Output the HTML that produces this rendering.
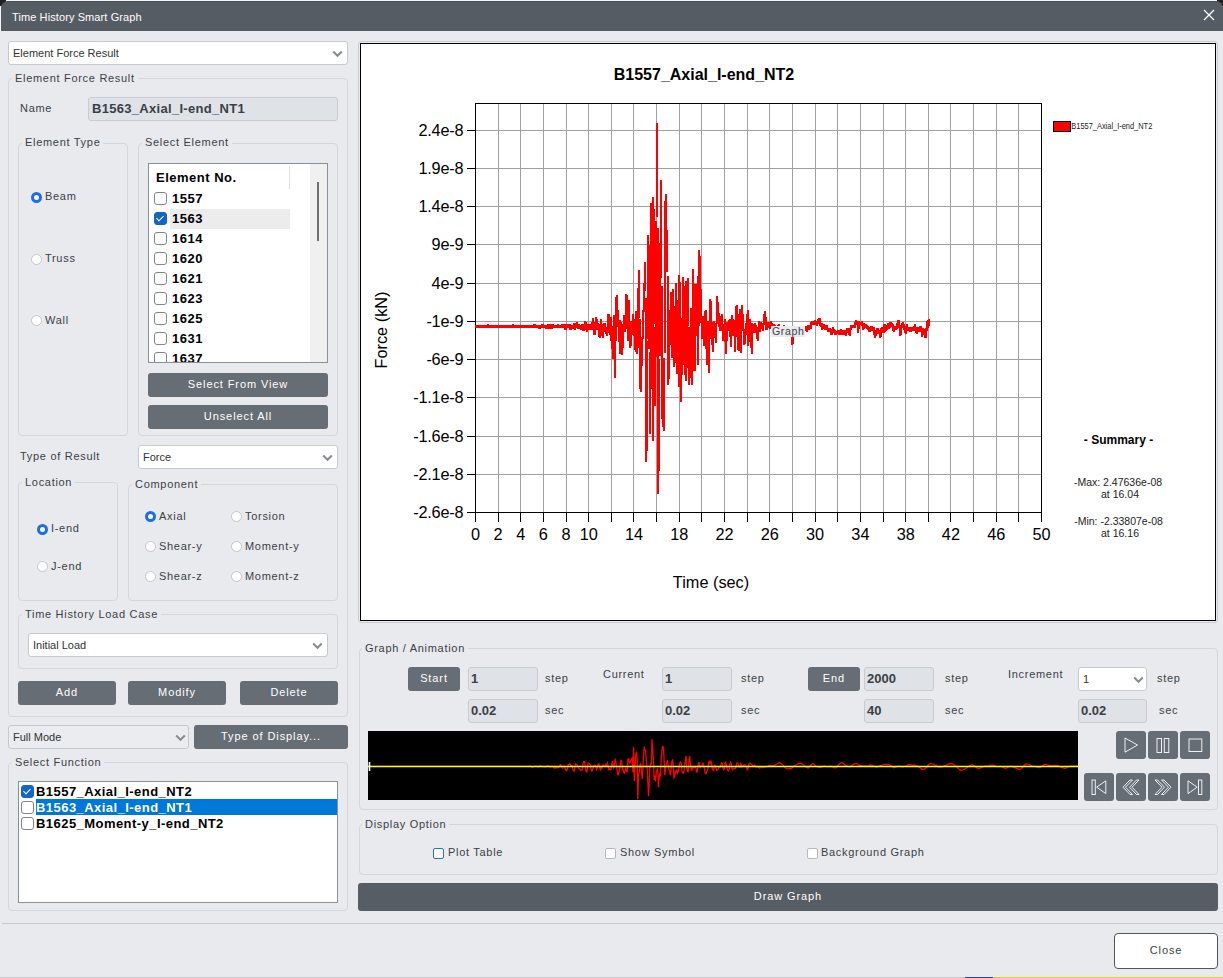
<!DOCTYPE html>
<html><head><meta charset="utf-8">
<style>
*{box-sizing:border-box;margin:0;padding:0}
html,body{width:1223px;height:978px;overflow:hidden;background:#e9eaed;font-family:"Liberation Sans",sans-serif;}
.a{position:absolute}
#title{left:1px;top:1px;width:1222px;height:30px;background:#565c64;border-top:1px solid #4b5159;border-top-left-radius:7px;border-top-right-radius:7px;}
#title .t{left:11px;top:9px;color:#fff;font-size:11px;letter-spacing:0.1px}
.grp{position:absolute;border:1px solid #d3d6da;border-radius:4px}
.gl{position:absolute;font-size:11px;letter-spacing:0.7px;color:#3a3f45;background:#e9eaed;padding:0 3px;line-height:12px;white-space:nowrap}
.lbl{position:absolute;font-size:11px;letter-spacing:0.7px;color:#3a3f45;line-height:12px;white-space:nowrap}
.combo{position:absolute;background:#fff;border:1px solid #c5cad0;border-radius:3px;font-size:11px;color:#333;white-space:nowrap}
.combo .ct{position:absolute;left:4px;top:5px;line-height:12px}
.chev{position:absolute;width:7px;height:7px;border-right:2px solid #7d8288;border-bottom:2px solid #7d8288;transform:rotate(45deg)}
.btn{position:absolute;background:#676d75;border-radius:3px;color:#fff;font-size:11px;letter-spacing:0.9px;text-align:center;white-space:nowrap}
.field{position:absolute;background:#dfe2e6;border:1px solid #c8ccd1;border-radius:3px;font-weight:bold;color:#3a3f45;white-space:nowrap}
.radio{position:absolute;width:11px;height:11px;border-radius:50%;border:1px solid #c3c6ca;background:#fff}
.radio.on{border:3px solid #1a6fe6;background:#fff}
.cb{position:absolute;width:13px;height:13px;border:1px solid #80858b;border-radius:3px;background:#fff}
.cb.on{background:#1565c9;border-color:#1565c9}
.cb.on::after{content:"";position:absolute;left:3px;top:1px;width:3px;height:6px;border-right:1.5px solid #fff;border-bottom:1.5px solid #fff;transform:rotate(45deg)}
.num{position:absolute;font-size:13px;font-weight:bold;letter-spacing:0.5px;color:#000;line-height:14px}
</style></head><body>
<div class="a" style="left:0;top:0;width:1223px;height:1px;background:#f4f5f7"></div><div class="a" style="left:0;top:0;width:1px;height:31px;background:#f4f5f7"></div><div class="a" style="left:0;top:0;width:6px;height:6px;background:#1e2226"></div><div class="a" style="left:1217px;top:0;width:6px;height:6px;background:#1e2226"></div><div class="a" style="left:0;top:977px;width:965px;height:1px;background:#c9cacc"></div><div class="a" style="left:965px;top:977px;width:28px;height:1px;background:#3040a0"></div><div class="a" style="left:993px;top:977px;width:230px;height:1px;background:#d8d040"></div>
<div id="title" class="a"><div class="a t">Time History Smart Graph</div>
<svg class="a" style="left:1202px;top:7px" width="12" height="12"><path d="M1 1L11 11M11 1L1 11" stroke="#fff" stroke-width="1.3"/></svg>
</div>

<!-- top combo -->
<div class="combo" style="left:8px;top:41px;width:340px;height:24px"><span class="ct">Element Force Result</span><svg class="a" style="left:323px;top:8px" width="11" height="8"><path d="M1.2 1.5L5.5 5.8L9.8 1.5" fill="none" stroke="#878c92" stroke-width="2"/></svg></div>

<!-- Element Force Result group -->
<div class="grp" style="left:8px;top:78px;width:340px;height:639px"></div>
<div class="gl" style="left:12px;top:72px">Element Force Result</div>
<div class="lbl" style="left:20px;top:102px">Name</div>
<div class="field" style="left:88px;top:97px;width:250px;height:24px;font-size:13px;letter-spacing:0.3px;padding:3px 0 0 3px">B1563_Axial_I-end_NT1</div>

<div class="grp" style="left:18px;top:143px;width:110px;height:293px"></div>
<div class="gl" style="left:22px;top:136px">Element Type</div>
<div class="radio on" style="left:31px;top:192px"></div><div class="lbl" style="left:45px;top:190px">Beam</div>
<div class="radio" style="left:31px;top:254px"></div><div class="lbl" style="left:45px;top:252px">Truss</div>
<div class="radio" style="left:31px;top:315px"></div><div class="lbl" style="left:45px;top:314px">Wall</div>

<div class="grp" style="left:138px;top:143px;width:200px;height:293px"></div>
<div class="gl" style="left:142px;top:136px">Select Element</div>
<div class="a" style="left:148px;top:163px;width:180px;height:200px;background:#fff;border:1px solid #8a9098;overflow:hidden">
  <div class="num" style="left:7px;top:7px">Element No.</div>
  <div class="a" style="left:140px;top:2px;width:1px;height:23px;background:#e0e0e0"></div>
  <div class="a" style="left:161px;top:0;width:18px;height:200px;background:#f0f0f0"></div>
  <div class="a" style="left:168px;top:18px;width:2px;height:59px;background:#707070"></div>
  <div class="a" style="left:21px;top:45px;width:120px;height:20px;background:#ececec"></div>
  <div class="cb" style="left:5px;top:28px"></div><div class="num" style="left:23px;top:28px">1557</div>
  <div class="cb on" style="left:5px;top:48px"></div><div class="num" style="left:23px;top:48px">1563</div>
  <div class="cb" style="left:5px;top:68px"></div><div class="num" style="left:23px;top:68px">1614</div>
  <div class="cb" style="left:5px;top:88px"></div><div class="num" style="left:23px;top:88px">1620</div>
  <div class="cb" style="left:5px;top:108px"></div><div class="num" style="left:23px;top:108px">1621</div>
  <div class="cb" style="left:5px;top:128px"></div><div class="num" style="left:23px;top:128px">1623</div>
  <div class="cb" style="left:5px;top:148px"></div><div class="num" style="left:23px;top:148px">1625</div>
  <div class="cb" style="left:5px;top:168px"></div><div class="num" style="left:23px;top:168px">1631</div>
  <div class="cb" style="left:5px;top:188px"></div><div class="num" style="left:23px;top:188px">1637</div>
</div>
<div class="btn" style="left:148px;top:373px;width:180px;height:24px;line-height:23px">Select From View</div>
<div class="btn" style="left:148px;top:405px;width:180px;height:24px;line-height:23px">Unselect All</div>

<div class="lbl" style="left:20px;top:450px">Type of Result</div>
<div class="combo" style="left:138px;top:445px;width:200px;height:24px"><span class="ct">Force</span><svg class="a" style="left:183px;top:8px" width="11" height="8"><path d="M1.2 1.5L5.5 5.8L9.8 1.5" fill="none" stroke="#878c92" stroke-width="2"/></svg></div>

<div class="grp" style="left:18px;top:482px;width:100px;height:119px"></div>
<div class="gl" style="left:22px;top:476px">Location</div>
<div class="radio on" style="left:37px;top:524px"></div><div class="lbl" style="left:51px;top:522px">I-end</div>
<div class="radio" style="left:37px;top:561px"></div><div class="lbl" style="left:51px;top:560px">J-end</div>

<div class="grp" style="left:128px;top:484px;width:210px;height:117px"></div>
<div class="gl" style="left:132px;top:478px">Component</div>
<div class="radio on" style="left:145px;top:511px"></div><div class="lbl" style="left:159px;top:510px">Axial</div>
<div class="radio" style="left:231px;top:511px"></div><div class="lbl" style="left:245px;top:510px">Torsion</div>
<div class="radio" style="left:145px;top:541px"></div><div class="lbl" style="left:159px;top:540px">Shear-y</div>
<div class="radio" style="left:231px;top:541px"></div><div class="lbl" style="left:245px;top:540px">Moment-y</div>
<div class="radio" style="left:145px;top:571px"></div><div class="lbl" style="left:159px;top:570px">Shear-z</div>
<div class="radio" style="left:231px;top:571px"></div><div class="lbl" style="left:245px;top:570px">Moment-z</div>

<div class="grp" style="left:18px;top:614px;width:320px;height:55px"></div>
<div class="gl" style="left:22px;top:608px">Time History Load Case</div>
<div class="combo" style="left:28px;top:633px;width:300px;height:24px"><span class="ct">Initial Load</span><svg class="a" style="left:283px;top:8px" width="11" height="8"><path d="M1.2 1.5L5.5 5.8L9.8 1.5" fill="none" stroke="#878c92" stroke-width="2"/></svg></div>

<div class="btn" style="left:18px;top:681px;width:98px;height:24px;line-height:23px">Add</div>
<div class="btn" style="left:128px;top:681px;width:98px;height:24px;line-height:23px">Modify</div>
<div class="btn" style="left:240px;top:681px;width:98px;height:24px;line-height:23px">Delete</div>

<div class="combo" style="left:8px;top:725px;width:181px;height:24px;background:#ebecef"><span class="ct">Full Mode</span><svg class="a" style="left:166px;top:8px" width="11" height="8"><path d="M1.2 1.5L5.5 5.8L9.8 1.5" fill="none" stroke="#878c92" stroke-width="2"/></svg></div>
<div class="btn" style="left:194px;top:725px;width:154px;height:24px;line-height:23px">Type of Display...</div>

<div class="grp" style="left:8px;top:762px;width:340px;height:149px"></div>
<div class="gl" style="left:12px;top:756px">Select Function</div>
<div class="a" style="left:18px;top:781px;width:320px;height:122px;background:#fff;border:1px solid #8a9098;overflow:hidden">
  <div class="cb on" style="left:2px;top:3px"></div><div class="num" style="left:17px;top:3px;letter-spacing:0.45px">B1557_Axial_I-end_NT2</div>
  <div class="a" style="left:17px;top:17px;width:301px;height:16px;background:#0078d7"></div>
  <div class="cb" style="left:2px;top:19px"></div><div class="num" style="left:17px;top:19px;color:#fff;letter-spacing:0.45px">B1563_Axial_I-end_NT1</div>
  <div class="cb" style="left:2px;top:35px"></div><div class="num" style="left:17px;top:35px;letter-spacing:0.45px">B1625_Moment-y_I-end_NT2</div>
</div>


<!-- chart panel -->
<div class="a" style="left:358px;top:41px;width:860px;height:582px;border:1px solid #c9cdd2;border-radius:3px"></div>
<div class="a" style="left:360px;top:43px;width:856px;height:578px;background:#fff;border:1px solid #000"></div>
<!--CHART-->
<svg class="a" style="left:361px;top:44px" width="855" height="577" viewBox="361 44 855 577">
<line x1="498.5" y1="103" x2="498.5" y2="512" stroke="#a0a0a0" stroke-width="1"/>
<line x1="520.5" y1="103" x2="520.5" y2="512" stroke="#a0a0a0" stroke-width="1"/>
<line x1="543.5" y1="103" x2="543.5" y2="512" stroke="#a0a0a0" stroke-width="1"/>
<line x1="566.5" y1="103" x2="566.5" y2="512" stroke="#a0a0a0" stroke-width="1"/>
<line x1="588.5" y1="103" x2="588.5" y2="512" stroke="#a0a0a0" stroke-width="1"/>
<line x1="611.5" y1="103" x2="611.5" y2="512" stroke="#a0a0a0" stroke-width="1"/>
<line x1="633.5" y1="103" x2="633.5" y2="512" stroke="#a0a0a0" stroke-width="1"/>
<line x1="656.5" y1="103" x2="656.5" y2="512" stroke="#a0a0a0" stroke-width="1"/>
<line x1="679.5" y1="103" x2="679.5" y2="512" stroke="#a0a0a0" stroke-width="1"/>
<line x1="701.5" y1="103" x2="701.5" y2="512" stroke="#a0a0a0" stroke-width="1"/>
<line x1="724.5" y1="103" x2="724.5" y2="512" stroke="#a0a0a0" stroke-width="1"/>
<line x1="747.5" y1="103" x2="747.5" y2="512" stroke="#a0a0a0" stroke-width="1"/>
<line x1="769.5" y1="103" x2="769.5" y2="512" stroke="#a0a0a0" stroke-width="1"/>
<line x1="792.5" y1="103" x2="792.5" y2="512" stroke="#a0a0a0" stroke-width="1"/>
<line x1="815.5" y1="103" x2="815.5" y2="512" stroke="#a0a0a0" stroke-width="1"/>
<line x1="837.5" y1="103" x2="837.5" y2="512" stroke="#a0a0a0" stroke-width="1"/>
<line x1="860.5" y1="103" x2="860.5" y2="512" stroke="#a0a0a0" stroke-width="1"/>
<line x1="883.5" y1="103" x2="883.5" y2="512" stroke="#a0a0a0" stroke-width="1"/>
<line x1="905.5" y1="103" x2="905.5" y2="512" stroke="#a0a0a0" stroke-width="1"/>
<line x1="928.5" y1="103" x2="928.5" y2="512" stroke="#a0a0a0" stroke-width="1"/>
<line x1="950.5" y1="103" x2="950.5" y2="512" stroke="#a0a0a0" stroke-width="1"/>
<line x1="973.5" y1="103" x2="973.5" y2="512" stroke="#a0a0a0" stroke-width="1"/>
<line x1="996.5" y1="103" x2="996.5" y2="512" stroke="#a0a0a0" stroke-width="1"/>
<line x1="1018.5" y1="103" x2="1018.5" y2="512" stroke="#a0a0a0" stroke-width="1"/>
<line x1="475" y1="130.5" x2="1041" y2="130.5" stroke="#a0a0a0" stroke-width="1"/>
<line x1="475" y1="168.5" x2="1041" y2="168.5" stroke="#a0a0a0" stroke-width="1"/>
<line x1="475" y1="206.5" x2="1041" y2="206.5" stroke="#a0a0a0" stroke-width="1"/>
<line x1="475" y1="244.5" x2="1041" y2="244.5" stroke="#a0a0a0" stroke-width="1"/>
<line x1="475" y1="283.5" x2="1041" y2="283.5" stroke="#a0a0a0" stroke-width="1"/>
<line x1="475" y1="321.5" x2="1041" y2="321.5" stroke="#a0a0a0" stroke-width="1"/>
<line x1="475" y1="359.5" x2="1041" y2="359.5" stroke="#a0a0a0" stroke-width="1"/>
<line x1="475" y1="397.5" x2="1041" y2="397.5" stroke="#a0a0a0" stroke-width="1"/>
<line x1="475" y1="436.5" x2="1041" y2="436.5" stroke="#a0a0a0" stroke-width="1"/>
<line x1="475" y1="474.5" x2="1041" y2="474.5" stroke="#a0a0a0" stroke-width="1"/>
<rect x="475.5" y="103.5" width="566" height="409" fill="none" stroke="#000" stroke-width="1"/>
<line x1="467" y1="130.5" x2="475" y2="130.5" stroke="#000" stroke-width="1"/>
<text x="463.2" y="136.1" text-anchor="end" font-size="16.3" letter-spacing="-0.25">2.4e-8</text>
<line x1="467" y1="168.5" x2="475" y2="168.5" stroke="#000" stroke-width="1"/>
<text x="463.2" y="174.1" text-anchor="end" font-size="16.3" letter-spacing="-0.25">1.9e-8</text>
<line x1="467" y1="206.5" x2="475" y2="206.5" stroke="#000" stroke-width="1"/>
<text x="463.2" y="212.1" text-anchor="end" font-size="16.3" letter-spacing="-0.25">1.4e-8</text>
<line x1="467" y1="244.5" x2="475" y2="244.5" stroke="#000" stroke-width="1"/>
<text x="463.2" y="250.1" text-anchor="end" font-size="16.3" letter-spacing="-0.25">9e-9</text>
<line x1="467" y1="283.5" x2="475" y2="283.5" stroke="#000" stroke-width="1"/>
<text x="463.2" y="289.1" text-anchor="end" font-size="16.3" letter-spacing="-0.25">4e-9</text>
<line x1="467" y1="321.5" x2="475" y2="321.5" stroke="#000" stroke-width="1"/>
<text x="463.2" y="327.1" text-anchor="end" font-size="16.3" letter-spacing="-0.25">-1e-9</text>
<line x1="467" y1="359.5" x2="475" y2="359.5" stroke="#000" stroke-width="1"/>
<text x="463.2" y="365.1" text-anchor="end" font-size="16.3" letter-spacing="-0.25">-6e-9</text>
<line x1="467" y1="397.5" x2="475" y2="397.5" stroke="#000" stroke-width="1"/>
<text x="463.2" y="403.1" text-anchor="end" font-size="16.3" letter-spacing="-0.25">-1.1e-8</text>
<line x1="467" y1="436.5" x2="475" y2="436.5" stroke="#000" stroke-width="1"/>
<text x="463.2" y="442.1" text-anchor="end" font-size="16.3" letter-spacing="-0.25">-1.6e-8</text>
<line x1="467" y1="474.5" x2="475" y2="474.5" stroke="#000" stroke-width="1"/>
<text x="463.2" y="480.1" text-anchor="end" font-size="16.3" letter-spacing="-0.25">-2.1e-8</text>
<line x1="467" y1="512.5" x2="475" y2="512.5" stroke="#000" stroke-width="1"/>
<text x="463.2" y="518.1" text-anchor="end" font-size="16.3" letter-spacing="-0.25">-2.6e-8</text>
<line x1="475.5" y1="512" x2="475.5" y2="522" stroke="#000" stroke-width="1"/>
<text x="475.5" y="540" text-anchor="middle" font-size="16.3">0</text>
<line x1="498.5" y1="512" x2="498.5" y2="522" stroke="#000" stroke-width="1"/>
<text x="498.1" y="540" text-anchor="middle" font-size="16.3">2</text>
<line x1="520.5" y1="512" x2="520.5" y2="522" stroke="#000" stroke-width="1"/>
<text x="520.8" y="540" text-anchor="middle" font-size="16.3">4</text>
<line x1="543.5" y1="512" x2="543.5" y2="522" stroke="#000" stroke-width="1"/>
<text x="543.4" y="540" text-anchor="middle" font-size="16.3">6</text>
<line x1="566.5" y1="512" x2="566.5" y2="522" stroke="#000" stroke-width="1"/>
<text x="566.1" y="540" text-anchor="middle" font-size="16.3">8</text>
<line x1="588.5" y1="512" x2="588.5" y2="522" stroke="#000" stroke-width="1"/>
<text x="588.7" y="540" text-anchor="middle" font-size="16.3">10</text>
<line x1="611.5" y1="512" x2="611.5" y2="522" stroke="#000" stroke-width="1"/>
<line x1="633.5" y1="512" x2="633.5" y2="522" stroke="#000" stroke-width="1"/>
<text x="634.0" y="540" text-anchor="middle" font-size="16.3">14</text>
<line x1="656.5" y1="512" x2="656.5" y2="522" stroke="#000" stroke-width="1"/>
<line x1="679.5" y1="512" x2="679.5" y2="522" stroke="#000" stroke-width="1"/>
<text x="679.3" y="540" text-anchor="middle" font-size="16.3">18</text>
<line x1="701.5" y1="512" x2="701.5" y2="522" stroke="#000" stroke-width="1"/>
<line x1="724.5" y1="512" x2="724.5" y2="522" stroke="#000" stroke-width="1"/>
<text x="724.5" y="540" text-anchor="middle" font-size="16.3">22</text>
<line x1="747.5" y1="512" x2="747.5" y2="522" stroke="#000" stroke-width="1"/>
<line x1="769.5" y1="512" x2="769.5" y2="522" stroke="#000" stroke-width="1"/>
<text x="769.8" y="540" text-anchor="middle" font-size="16.3">26</text>
<line x1="792.5" y1="512" x2="792.5" y2="522" stroke="#000" stroke-width="1"/>
<line x1="815.5" y1="512" x2="815.5" y2="522" stroke="#000" stroke-width="1"/>
<text x="815.1" y="540" text-anchor="middle" font-size="16.3">30</text>
<line x1="837.5" y1="512" x2="837.5" y2="522" stroke="#000" stroke-width="1"/>
<line x1="860.5" y1="512" x2="860.5" y2="522" stroke="#000" stroke-width="1"/>
<text x="860.4" y="540" text-anchor="middle" font-size="16.3">34</text>
<line x1="883.5" y1="512" x2="883.5" y2="522" stroke="#000" stroke-width="1"/>
<line x1="905.5" y1="512" x2="905.5" y2="522" stroke="#000" stroke-width="1"/>
<text x="905.7" y="540" text-anchor="middle" font-size="16.3">38</text>
<line x1="928.5" y1="512" x2="928.5" y2="522" stroke="#000" stroke-width="1"/>
<line x1="950.5" y1="512" x2="950.5" y2="522" stroke="#000" stroke-width="1"/>
<text x="950.9" y="540" text-anchor="middle" font-size="16.3">42</text>
<line x1="973.5" y1="512" x2="973.5" y2="522" stroke="#000" stroke-width="1"/>
<line x1="996.5" y1="512" x2="996.5" y2="522" stroke="#000" stroke-width="1"/>
<text x="996.2" y="540" text-anchor="middle" font-size="16.3">46</text>
<line x1="1018.5" y1="512" x2="1018.5" y2="522" stroke="#000" stroke-width="1"/>
<line x1="1041.5" y1="512" x2="1041.5" y2="522" stroke="#000" stroke-width="1"/>
<text x="1041.5" y="540" text-anchor="middle" font-size="16.3">50</text>
<text x="711" y="588" text-anchor="middle" font-size="16.3">Time (sec)</text>
<text transform="translate(386.6 330) rotate(-90)" text-anchor="middle" font-size="16.3">Force (kN)</text>
<text x="704" y="80" text-anchor="middle" font-size="16" font-weight="bold">B1557_Axial_I-end_NT2</text>
<rect x="1053.5" y="121.5" width="17" height="10" fill="#ff0000" stroke="#000" stroke-width="1"/>
<text x="1071.3" y="129.3" font-size="8.4" fill="#222" textLength="81" lengthAdjust="spacingAndGlyphs">B1557_Axial_I-end_NT2</text>
<text x="1118.5" y="444" text-anchor="middle" font-size="12" font-weight="bold">- Summary -</text>
<text x="1118" y="485.5" text-anchor="middle" font-size="10.5" fill="#222">-Max: 2.47636e-08</text>
<text x="1120" y="498.3" text-anchor="middle" font-size="10.5" fill="#222">at 16.04</text>
<text x="1118.5" y="524.6" text-anchor="middle" font-size="10.5" fill="#222">-Min: -2.33807e-08</text>
<text x="1120" y="537" text-anchor="middle" font-size="10.5" fill="#222">at 16.16</text>
<path d="M475 325h2V328h-2ZM476 325h2V328h-2ZM477 325h2V328h-2ZM478 325h2V328h-2ZM479 325h2V328h-2ZM480 325h2V328h-2ZM481 325h2V328h-2ZM482 325h2V328h-2ZM483 325h2V328h-2ZM484 325h2V328h-2ZM485 325h2V328h-2ZM486 325h2V328h-2ZM487 324h2V328h-2ZM488 325h2V328h-2ZM489 325h2V328h-2ZM490 325h2V328h-2ZM491 325h2V328h-2ZM492 325h2V328h-2ZM493 325h2V328h-2ZM494 325h2V328h-2ZM495 325h2V328h-2ZM496 325h2V328h-2ZM497 325h2V328h-2ZM498 325h2V328h-2ZM499 325h2V328h-2ZM500 325h2V328h-2ZM501 325h2V328h-2ZM502 325h2V328h-2ZM503 325h2V328h-2ZM504 325h2V328h-2ZM505 325h2V328h-2ZM506 325h2V328h-2ZM507 325h2V328h-2ZM508 325h2V328h-2ZM509 325h2V328h-2ZM510 325h2V328h-2ZM511 325h2V328h-2ZM512 324h2V328h-2ZM513 325h2V328h-2ZM514 325h2V328h-2ZM515 325h2V328h-2ZM516 325h2V328h-2ZM517 325h2V328h-2ZM518 325h2V328h-2ZM519 325h2V328h-2ZM520 325h2V328h-2ZM521 325h2V328h-2ZM522 325h2V328h-2ZM523 325h2V328h-2ZM524 325h2V328h-2ZM525 325h2V328h-2ZM526 325h2V328h-2ZM527 325h2V328h-2ZM528 325h2V328h-2ZM529 325h2V328h-2ZM530 325h2V328h-2ZM531 325h2V328h-2ZM532 325h2V328h-2ZM533 324h2V328h-2ZM534 324h2V328h-2ZM535 325h2V328h-2ZM536 325h2V328h-2ZM537 325h2V328h-2ZM538 325h2V329h-2ZM539 325h2V329h-2ZM540 325h2V328h-2ZM541 324h2V328h-2ZM542 324h2V328h-2ZM543 325h2V328h-2ZM544 325h2V328h-2ZM545 325h2V329h-2ZM546 325h2V329h-2ZM547 324h2V328h-2ZM548 325h2V329h-2ZM549 324h2V328h-2ZM550 324h2V329h-2ZM551 325h2V329h-2ZM552 324h2V328h-2ZM553 325h2V328h-2ZM554 325h2V328h-2ZM555 325h2V328h-2ZM556 325h2V328h-2ZM557 324h2V328h-2ZM558 325h2V328h-2ZM559 325h2V328h-2ZM560 325h2V328h-2ZM561 324h2V328h-2ZM562 324h2V328h-2ZM563 324h2V328h-2ZM564 324h2V330h-2ZM565 325h2V330h-2ZM566 324h2V328h-2ZM567 324h2V328h-2ZM568 324h2V328h-2ZM569 324h2V330h-2ZM570 325h2V330h-2ZM571 325h2V329h-2ZM572 325h2V329h-2ZM573 323h2V328h-2ZM574 325h2V330h-2ZM575 323h2V328h-2ZM576 322h2V327h-2ZM577 324h2V329h-2ZM578 324h2V328h-2ZM579 325h2V329h-2ZM580 326h2V330h-2ZM581 324h2V329h-2ZM582 324h2V331h-2ZM583 325h2V331h-2ZM584 321h2V328h-2ZM585 322h2V330h-2ZM586 327h2V332h-2ZM587 324h2V330h-2ZM588 324h2V329h-2ZM589 325h2V330h-2ZM590 324h2V329h-2ZM591 322h2V330h-2ZM592 318h2V325h-2ZM593 322h2V335h-2ZM594 324h2V335h-2ZM595 317h2V326h-2ZM596 319h2V330h-2ZM597 323h2V330h-2ZM598 324h2V337h-2ZM599 324h2V338h-2ZM600 319h2V327h-2ZM601 324h2V336h-2ZM602 329h2V338h-2ZM603 323h2V332h-2ZM604 323h2V330h-2ZM605 327h2V334h-2ZM606 331h2V336h-2ZM607 314h2V333h-2ZM608 314h2V326h-2ZM609 323h2V335h-2ZM610 317h2V341h-2ZM611 326h2V349h-2ZM612 341h2V359h-2ZM613 315h2V344h-2ZM614 341h2V378h-2ZM615 297h2V341h-2ZM616 295h2V312h-2ZM617 310h2V327h-2ZM618 325h2V342h-2ZM619 320h2V354h-2ZM620 322h2V341h-2ZM621 339h2V355h-2ZM622 324h2V348h-2ZM623 315h2V326h-2ZM624 321h2V332h-2ZM625 294h2V329h-2ZM626 295h2V324h-2ZM627 317h2V341h-2ZM628 300h2V322h-2ZM629 321h2V348h-2ZM630 332h2V346h-2ZM631 321h2V335h-2ZM632 314h2V324h-2ZM633 319h2V336h-2ZM634 333h2V350h-2ZM635 311h2V352h-2ZM636 325h2V354h-2ZM637 288h2V348h-2ZM638 270h2V318h-2ZM639 319h2V389h-2ZM640 364h2V392h-2ZM641 337h2V366h-2ZM642 310h2V339h-2ZM643 283h2V312h-2ZM644 262h2V291h-2ZM645 298h2V462h-2ZM646 341h2V451h-2ZM647 235h2V339h-2ZM648 245h2V349h-2ZM649 352h2V434h-2ZM650 203h2V389h-2ZM651 225h2V335h-2ZM652 197h2V441h-2ZM653 209h2V324h-2ZM654 327h2V406h-2ZM655 221h2V357h-2ZM656 123h2V217h-2ZM657 228h2V494h-2ZM658 359h2V471h-2ZM659 243h2V356h-2ZM660 180h2V278h-2ZM661 286h2V419h-2ZM662 416h2V427h-2ZM663 358h2V431h-2ZM664 201h2V353h-2ZM665 194h2V231h-2ZM666 230h2V272h-2ZM667 276h2V385h-2ZM668 344h2V379h-2ZM669 310h2V345h-2ZM670 292h2V335h-2ZM671 323h2V358h-2ZM672 289h2V324h-2ZM673 306h2V367h-2ZM674 318h2V363h-2ZM675 283h2V319h-2ZM676 300h2V374h-2ZM677 312h2V361h-2ZM678 275h2V387h-2ZM679 282h2V360h-2ZM680 360h2V402h-2ZM681 318h2V375h-2ZM682 277h2V319h-2ZM683 297h2V365h-2ZM684 286h2V375h-2ZM685 281h2V381h-2ZM686 301h2V368h-2ZM687 278h2V326h-2ZM688 327h2V385h-2ZM689 340h2V378h-2ZM690 308h2V341h-2ZM691 322h2V385h-2ZM692 269h2V371h-2ZM693 291h2V364h-2ZM694 284h2V371h-2ZM695 289h2V332h-2ZM696 284h2V336h-2ZM697 276h2V365h-2ZM698 250h2V326h-2ZM699 256h2V290h-2ZM700 289h2V323h-2ZM701 321h2V339h-2ZM702 316h2V329h-2ZM703 326h2V346h-2ZM704 311h2V343h-2ZM705 310h2V349h-2ZM706 342h2V365h-2ZM707 321h2V355h-2ZM708 338h2V373h-2ZM709 299h2V339h-2ZM710 301h2V324h-2ZM711 322h2V345h-2ZM712 336h2V352h-2ZM713 321h2V338h-2ZM714 324h2V336h-2ZM715 323h2V343h-2ZM716 296h2V324h-2ZM717 302h2V316h-2ZM718 313h2V327h-2ZM719 323h2V331h-2ZM720 316h2V326h-2ZM721 314h2V331h-2ZM722 329h2V341h-2ZM723 324h2V336h-2ZM724 319h2V342h-2ZM725 339h2V354h-2ZM726 322h2V341h-2ZM727 323h2V331h-2ZM728 320h2V331h-2ZM729 319h2V337h-2ZM730 333h2V347h-2ZM731 315h2V335h-2ZM732 319h2V336h-2ZM733 320h2V335h-2ZM734 323h2V352h-2ZM735 306h2V337h-2ZM736 305h2V328h-2ZM737 326h2V350h-2ZM738 314h2V351h-2ZM739 309h2V346h-2ZM740 321h2V353h-2ZM741 305h2V321h-2ZM742 314h2V331h-2ZM743 329h2V345h-2ZM744 332h2V344h-2ZM745 323h2V335h-2ZM746 314h2V326h-2ZM747 310h2V346h-2ZM748 325h2V342h-2ZM749 319h2V332h-2ZM750 330h2V348h-2ZM751 323h2V354h-2ZM752 324h2V331h-2ZM753 328h2V333h-2ZM754 323h2V330h-2ZM755 325h2V333h-2ZM756 330h2V339h-2ZM757 327h2V341h-2ZM758 321h2V329h-2ZM759 326h2V332h-2ZM760 322h2V329h-2ZM761 323h2V329h-2ZM762 323h2V331h-2ZM763 314h2V325h-2ZM764 311h2V320h-2ZM765 317h2V330h-2ZM766 324h2V330h-2ZM767 322h2V327h-2ZM768 322h2V328h-2ZM769 323h2V329h-2ZM770 321h2V326h-2ZM771 323h2V329h-2ZM772 325h2V330h-2ZM773 324h2V328h-2ZM774 325h2V329h-2ZM775 326h2V329h-2ZM776 326h2V329h-2ZM777 325h2V329h-2ZM778 324h2V330h-2ZM779 327h2V334h-2ZM780 328h2V334h-2ZM781 328h2V331h-2ZM782 326h2V331h-2ZM783 325h2V329h-2ZM784 326h2V335h-2ZM785 329h2V335h-2ZM786 328h2V331h-2ZM787 328h2V331h-2ZM788 328h2V331h-2ZM789 328h2V333h-2ZM790 328h2V334h-2ZM791 332h2V345h-2ZM792 332h2V344h-2ZM793 328h2V334h-2ZM794 327h2V331h-2ZM795 328h2V332h-2ZM796 327h2V331h-2ZM797 327h2V331h-2ZM798 328h2V337h-2ZM799 327h2V335h-2ZM800 326h2V330h-2ZM801 326h2V331h-2ZM802 326h2V332h-2ZM803 328h2V334h-2ZM804 326h2V331h-2ZM805 326h2V330h-2ZM806 327h2V332h-2ZM807 325h2V330h-2ZM808 326h2V330h-2ZM809 325h2V329h-2ZM810 322h2V329h-2ZM811 321h2V325h-2ZM812 322h2V325h-2ZM813 321h2V325h-2ZM814 320h2V324h-2ZM815 321h2V325h-2ZM816 321h2V326h-2ZM817 319h2V324h-2ZM818 318h2V322h-2ZM819 318h2V326h-2ZM820 323h2V327h-2ZM821 323h2V330h-2ZM822 324h2V329h-2ZM823 324h2V329h-2ZM824 326h2V330h-2ZM825 325h2V329h-2ZM826 325h2V330h-2ZM827 328h2V332h-2ZM828 328h2V332h-2ZM829 328h2V332h-2ZM830 329h2V335h-2ZM831 329h2V335h-2ZM832 327h2V332h-2ZM833 329h2V333h-2ZM834 330h2V335h-2ZM835 331h2V335h-2ZM836 331h2V334h-2ZM837 330h2V334h-2ZM838 331h2V335h-2ZM839 330h2V335h-2ZM840 329h2V333h-2ZM841 330h2V335h-2ZM842 331h2V335h-2ZM843 330h2V335h-2ZM844 332h2V335h-2ZM845 330h2V336h-2ZM846 328h2V333h-2ZM847 328h2V332h-2ZM848 328h2V335h-2ZM849 328h2V336h-2ZM850 325h2V330h-2ZM851 325h2V328h-2ZM852 325h2V328h-2ZM853 325h2V328h-2ZM854 322h2V328h-2ZM855 320h2V325h-2ZM856 321h2V325h-2ZM857 323h2V333h-2ZM858 321h2V329h-2ZM859 322h2V325h-2ZM860 322h2V325h-2ZM861 321h2V326h-2ZM862 323h2V330h-2ZM863 323h2V329h-2ZM864 324h2V328h-2ZM865 324h2V328h-2ZM866 325h2V329h-2ZM867 326h2V330h-2ZM868 327h2V332h-2ZM869 328h2V332h-2ZM870 326h2V331h-2ZM871 326h2V330h-2ZM872 328h2V331h-2ZM873 327h2V335h-2ZM874 333h2V338h-2ZM875 330h2V336h-2ZM876 328h2V332h-2ZM877 328h2V334h-2ZM878 330h2V334h-2ZM879 331h2V338h-2ZM880 328h2V337h-2ZM881 327h2V331h-2ZM882 328h2V333h-2ZM883 324h2V333h-2ZM884 324h2V332h-2ZM885 327h2V331h-2ZM886 325h2V330h-2ZM887 323h2V328h-2ZM888 324h2V329h-2ZM889 322h2V328h-2ZM890 322h2V325h-2ZM891 323h2V327h-2ZM892 324h2V331h-2ZM893 326h2V332h-2ZM894 326h2V329h-2ZM895 326h2V330h-2ZM896 323h2V329h-2ZM897 320h2V326h-2ZM898 320h2V328h-2ZM899 325h2V336h-2ZM900 325h2V335h-2ZM901 323h2V328h-2ZM902 322h2V327h-2ZM903 324h2V330h-2ZM904 327h2V333h-2ZM905 326h2V334h-2ZM906 324h2V330h-2ZM907 327h2V331h-2ZM908 327h2V331h-2ZM909 328h2V332h-2ZM910 327h2V332h-2ZM911 327h2V331h-2ZM912 327h2V331h-2ZM913 326h2V331h-2ZM914 324h2V330h-2ZM915 327h2V333h-2ZM916 329h2V334h-2ZM917 327h2V332h-2ZM918 329h2V332h-2ZM919 326h2V332h-2ZM920 326h2V332h-2ZM921 329h2V337h-2ZM922 328h2V335h-2ZM923 329h2V334h-2ZM924 331h2V338h-2ZM925 328h2V338h-2ZM926 321h2V331h-2ZM927 320h2V328h-2ZM928 319h2V326h-2Z" fill="#ff0000" shape-rendering="crispEdges"/>
<rect x="771" y="326" width="34" height="11" fill="#e9ebee"/>
<text x="772" y="335" font-size="10.6" letter-spacing="0.6" fill="#3c4148">Graph</text>
</svg>
<!--/CHART-->

<!-- Graph / Animation -->
<div class="grp" style="left:359px;top:648px;width:859px;height:162px"></div>
<div class="gl" style="left:362px;top:642px">Graph / Animation</div>
<div class="btn" style="left:408px;top:667px;width:52px;height:24px;line-height:23px">Start</div>
<div class="field" style="left:468px;top:667px;width:70px;height:24px;font-size:13px;padding:3px 0 0 2px">1</div>
<div class="lbl" style="left:545px;top:672px">step</div>
<div class="field" style="left:468px;top:699px;width:70px;height:24px;font-size:13px;padding:3px 0 0 2px">0.02</div>
<div class="lbl" style="left:545px;top:704px">sec</div>
<div class="lbl" style="left:603px;top:668px">Current</div>
<div class="field" style="left:662px;top:667px;width:70px;height:24px;font-size:13px;padding:3px 0 0 2px">1</div>
<div class="lbl" style="left:741px;top:672px">step</div>
<div class="field" style="left:662px;top:699px;width:70px;height:24px;font-size:13px;padding:3px 0 0 2px">0.02</div>
<div class="lbl" style="left:741px;top:704px">sec</div>
<div class="btn" style="left:808px;top:667px;width:52px;height:24px;line-height:23px">End</div>
<div class="field" style="left:864px;top:667px;width:70px;height:24px;font-size:13px;padding:3px 0 0 2px">2000</div>
<div class="lbl" style="left:945px;top:672px">step</div>
<div class="field" style="left:864px;top:699px;width:70px;height:24px;font-size:13px;padding:3px 0 0 2px">40</div>
<div class="lbl" style="left:945px;top:704px">sec</div>
<div class="lbl" style="left:1008px;top:668px">Increment</div>
<div class="combo" style="left:1078px;top:667px;width:69px;height:24px"><span class="ct">1</span><svg class="a" style="left:54px;top:8px" width="11" height="8"><path d="M1.2 1.5L5.5 5.8L9.8 1.5" fill="none" stroke="#878c92" stroke-width="2"/></svg></div>
<div class="lbl" style="left:1157px;top:672px">step</div>
<div class="field" style="left:1078px;top:699px;width:69px;height:24px;font-size:13px;padding:3px 0 0 2px">0.02</div>
<div class="lbl" style="left:1159px;top:704px">sec</div>
<div class="a" style="left:368px;top:731px;width:710px;height:69px;background:#000;overflow:hidden">
<!--MINI-->
<svg class="a" style="left:0;top:0" width="710" height="69">
<path d="M0.50 35.40 L1.21 35.40 L1.92 35.40 L2.63 35.40 L3.34 35.40 L4.04 35.40 L4.75 35.40 L5.46 35.40 L6.17 35.40 L6.88 35.40 L7.59 35.40 L8.30 35.40 L9.01 35.40 L9.71 35.40 L10.42 35.40 L11.13 35.40 L11.84 35.40 L12.55 35.40 L13.26 35.40 L13.97 35.40 L14.68 35.40 L15.38 35.40 L16.09 35.40 L16.80 35.40 L17.51 35.40 L18.22 35.40 L18.93 35.40 L19.64 35.40 L20.35 35.40 L21.06 35.40 L21.76 35.40 L22.47 35.40 L23.18 35.40 L23.89 35.40 L24.60 35.40 L25.31 35.40 L26.02 35.40 L26.73 35.40 L27.43 35.40 L28.14 35.40 L28.85 35.40 L29.56 35.40 L30.27 35.40 L30.98 35.40 L31.69 35.40 L32.40 35.40 L33.10 35.40 L33.81 35.40 L34.52 35.40 L35.23 35.40 L35.94 35.40 L36.65 35.40 L37.36 35.40 L38.07 35.40 L38.78 35.40 L39.48 35.40 L40.19 35.40 L40.90 35.40 L41.61 35.40 L42.32 35.40 L43.03 35.40 L43.74 35.40 L44.45 35.40 L45.15 35.40 L45.86 35.40 L46.57 35.40 L47.28 35.40 L47.99 35.40 L48.70 35.40 L49.41 35.40 L50.12 35.40 L50.82 35.40 L51.53 35.40 L52.24 35.40 L52.95 35.40 L53.66 35.40 L54.37 35.40 L55.08 35.40 L55.79 35.40 L56.50 35.40 L57.20 35.40 L57.91 35.40 L58.62 35.40 L59.33 35.40 L60.04 35.40 L60.75 35.40 L61.46 35.40 L62.17 35.40 L62.87 35.40 L63.58 35.40 L64.29 35.40 L65.00 35.40 L65.71 35.40 L66.42 35.40 L67.13 35.40 L67.84 35.40 L68.54 35.40 L69.25 35.40 L69.96 35.40 L70.67 35.40 L71.38 35.40 L72.09 35.40 L72.80 35.40 L73.51 35.40 L74.22 35.40 L74.92 35.40 L75.63 35.40 L76.34 35.40 L77.05 35.40 L77.76 35.40 L78.47 35.40 L79.18 35.40 L79.89 35.40 L80.59 35.40 L81.30 35.40 L82.01 35.40 L82.72 35.40 L83.43 35.40 L84.14 35.40 L84.85 35.40 L85.56 35.40 L86.26 35.40 L86.97 35.40 L87.68 35.40 L88.39 35.40 L89.10 35.40 L89.81 35.40 L90.52 35.40 L91.23 35.40 L91.94 35.40 L92.64 35.40 L93.35 35.40 L94.06 35.40 L94.77 35.40 L95.48 35.40 L96.19 35.40 L96.90 35.40 L97.61 35.40 L98.31 35.40 L99.02 35.40 L99.73 35.40 L100.44 35.40 L101.15 35.40 L101.86 35.40 L102.57 35.40 L103.28 35.40 L103.98 35.40 L104.69 35.40 L105.40 35.40 L106.11 35.40 L106.82 35.40 L107.53 35.40 L108.24 35.40 L108.95 35.40 L109.66 35.40 L110.36 35.40 L111.07 35.40 L111.78 35.40 L112.49 35.40 L113.20 35.40 L113.91 35.40 L114.62 35.40 L115.33 35.40 L116.03 35.40 L116.74 35.40 L117.45 35.40 L118.16 35.40 L118.87 35.40 L119.58 35.40 L120.29 35.40 L121.00 35.40 L121.70 35.40 L122.41 35.40 L123.12 35.40 L123.83 35.40 L124.54 35.40 L125.25 35.40 L125.96 35.40 L126.67 35.40 L127.38 35.40 L128.08 35.40 L128.79 35.40 L129.50 35.40 L130.21 35.40 L130.92 35.40 L131.63 35.40 L132.34 35.40 L133.05 35.40 L133.75 35.40 L134.46 35.40 L135.17 35.40 L135.88 35.40 L136.59 35.40 L137.30 35.40 L138.01 35.40 L138.72 35.40 L139.42 35.40 L140.13 35.40 L140.84 35.40 L141.55 35.40 L142.26 35.40 L142.97 35.40 L143.68 35.40 L144.39 35.40 L145.10 35.40 L145.80 35.40 L146.51 35.40 L147.22 35.40 L147.93 35.40 L148.64 35.40 L149.35 35.40 L150.06 35.40 L150.77 35.40 L151.47 35.40 L152.18 35.40 L152.89 35.40 L153.60 35.40 L154.31 35.40 L155.02 35.40 L155.73 35.40 L156.44 35.40 L157.14 35.40 L157.85 35.40 L158.56 35.40 L159.27 35.40 L159.98 35.63 L160.69 35.31 L161.40 35.05 L162.11 34.92 L162.82 35.37 L163.52 35.81 L164.23 36.12 L164.94 36.12 L165.65 35.54 L166.36 35.30 L167.07 35.18 L167.78 35.19 L168.49 35.13 L169.19 35.38 L169.90 35.73 L170.61 35.92 L171.32 35.39 L172.03 34.95 L172.74 34.96 L173.45 35.15 L174.16 35.37 L174.86 35.49 L175.57 35.56 L176.28 35.59 L176.99 35.78 L177.70 35.83 L178.41 35.27 L179.12 34.82 L179.83 34.79 L180.54 35.18 L181.24 35.57 L181.95 35.61 L182.66 35.86 L183.37 35.67 L184.08 35.28 L184.79 35.55 L185.50 36.20 L186.21 36.92 L186.91 37.39 L187.62 35.90 L188.33 36.73 L189.04 36.78 L189.75 36.66 L190.46 36.53 L191.17 35.75 L191.88 34.10 L192.58 33.74 L193.29 34.53 L194.00 36.21 L194.71 37.05 L195.42 35.51 L196.13 35.11 L196.84 36.47 L197.55 38.36 L198.26 39.34 L198.96 39.67 L199.67 36.17 L200.38 33.59 L201.09 33.40 L201.80 32.64 L202.51 34.42 L203.22 35.06 L203.93 34.65 L204.63 36.85 L205.34 39.56 L206.05 40.22 L206.76 36.81 L207.47 32.71 L208.18 33.40 L208.89 33.54 L209.60 35.07 L210.30 36.78 L211.01 37.85 L211.72 37.65 L212.43 39.01 L213.14 39.36 L213.85 39.33 L214.56 36.52 L215.27 31.75 L215.98 30.75 L216.68 30.72 L217.39 36.26 L218.10 40.82 L218.81 41.02 L219.52 36.15 L220.23 32.07 L220.94 32.55 L221.65 33.03 L222.35 33.80 L223.06 37.73 L223.77 39.84 L224.48 39.13 L225.19 36.74 L225.90 34.62 L226.61 34.44 L227.32 34.57 L228.02 36.04 L228.73 38.26 L229.44 35.32 L230.15 33.48 L230.86 32.80 L231.57 36.31 L232.28 38.61 L232.99 36.67 L233.70 37.45 L234.40 34.73 L235.11 34.36 L235.82 33.98 L236.53 34.74 L237.24 35.13 L237.95 33.21 L238.66 34.01 L239.37 32.10 L240.07 34.30 L240.78 38.58 L241.49 37.76 L242.20 38.74 L242.91 38.52 L243.62 34.52 L244.33 30.12 L245.04 34.47 L245.74 36.43 L246.45 32.31 L247.16 28.65 L247.87 30.65 L248.58 35.91 L249.29 40.13 L250.00 43.96 L250.71 42.68 L251.42 38.71 L252.12 35.12 L252.83 29.45 L253.54 29.94 L254.25 38.72 L254.96 38.34 L255.67 41.27 L256.38 41.98 L257.09 39.57 L257.79 37.60 L258.50 40.26 L259.21 40.57 L259.92 27.94 L260.63 27.75 L261.34 32.26 L262.05 31.37 L262.76 29.56 L263.46 28.06 L264.17 27.03 L264.88 41.34 L265.59 16.00 L266.30 49.96 L267.01 37.30 L267.72 24.29 L268.43 20.65 L269.14 27.45 L269.84 68.00 L270.55 42.97 L271.26 41.76 L271.97 33.65 L272.68 32.69 L273.39 38.73 L274.10 47.83 L274.81 38.11 L275.51 24.20 L276.22 15.57 L276.93 19.50 L277.64 19.52 L278.35 30.74 L279.06 34.99 L279.77 49.18 L280.48 65.30 L281.18 53.57 L281.89 36.49 L282.60 32.96 L283.31 33.29 L284.02 8.20 L284.73 18.83 L285.44 28.57 L286.15 48.92 L286.86 44.65 L287.56 50.35 L288.27 40.48 L288.98 38.90 L289.69 37.40 L290.40 56.09 L291.11 47.66 L291.82 42.16 L292.53 45.50 L293.23 26.90 L293.94 19.76 L294.65 15.64 L295.36 16.06 L296.07 28.20 L296.78 44.23 L297.49 37.59 L298.20 33.97 L298.90 30.97 L299.61 29.21 L300.32 35.76 L301.03 38.71 L301.74 40.52 L302.45 44.45 L303.16 38.14 L303.87 30.40 L304.58 28.42 L305.28 34.76 L305.99 46.87 L306.70 45.57 L307.41 39.95 L308.12 41.22 L308.83 39.12 L309.54 41.98 L310.25 40.22 L310.95 36.20 L311.66 32.23 L312.37 30.89 L313.08 31.87 L313.79 38.41 L314.50 41.81 L315.21 42.16 L315.92 39.65 L316.62 35.13 L317.33 30.66 L318.04 25.15 L318.75 36.05 L319.46 40.36 L320.17 40.78 L320.88 30.87 L321.59 24.74 L322.30 32.17 L323.00 36.66 L323.71 40.01 L324.42 36.46 L325.13 37.08 L325.84 36.84 L326.55 36.33 L327.26 35.84 L327.97 36.96 L328.67 41.76 L329.38 39.83 L330.09 33.71 L330.80 31.22 L331.51 34.87 L332.22 36.49 L332.93 35.38 L333.64 35.19 L334.34 35.24 L335.05 31.61 L335.76 34.52 L336.47 37.67 L337.18 42.32 L337.89 42.78 L338.60 40.77 L339.31 38.90 L340.02 37.49 L340.72 31.33 L341.43 30.34 L342.14 32.70 L342.85 30.28 L343.56 31.76 L344.27 37.92 L344.98 38.90 L345.69 39.33 L346.39 34.38 L347.10 34.45 L347.81 36.08 L348.52 39.30 L349.23 38.85 L349.94 38.51 L350.65 36.81 L351.36 35.76 L352.06 35.97 L352.77 34.07 L353.48 31.89 L354.19 32.41 L354.90 35.80 L355.61 38.70 L356.32 38.21 L357.03 32.42 L357.74 31.20 L358.44 34.10 L359.15 37.22 L359.86 39.45 L360.57 39.98 L361.28 38.18 L361.99 33.32 L362.70 31.38 L363.41 33.27 L364.11 37.71 L364.82 38.49 L365.53 37.36 L366.24 37.42 L366.95 37.93 L367.66 36.95 L368.37 33.98 L369.08 31.92 L369.78 32.26 L370.49 34.60 L371.20 35.76 L371.91 36.18 L372.62 32.71 L373.33 33.97 L374.04 35.93 L374.75 35.02 L375.46 35.19 L376.16 33.61 L376.87 33.91 L377.58 34.82 L378.29 36.15 L379.00 38.11 L379.71 38.91 L380.42 35.24 L381.13 32.59 L381.83 31.95 L382.54 32.38 L383.25 33.46 L383.96 33.75 L384.67 34.62 L385.38 35.27 L386.09 34.46 L386.80 34.32 L387.50 35.43 L388.21 35.84 L388.92 36.08 L389.63 35.48 L390.34 35.81 L391.05 36.71 L391.76 37.17 L392.47 36.21 L393.18 35.97 L393.88 36.20 L394.59 36.48 L395.30 36.57 L396.01 36.15 L396.72 35.48 L397.43 36.07 L398.14 35.76 L398.85 35.56 L399.55 35.60 L400.26 34.84 L400.97 34.79 L401.68 34.46 L402.39 34.45 L403.10 34.89 L403.81 34.82 L404.52 34.75 L405.22 34.60 L405.93 34.72 L406.64 34.46 L407.35 33.90 L408.06 33.64 L408.77 33.31 L409.48 32.74 L410.19 32.35 L410.90 31.88 L411.60 31.62 L412.31 31.94 L413.02 32.32 L413.73 32.87 L414.44 33.59 L415.15 34.35 L415.86 35.04 L416.57 35.94 L417.27 36.67 L417.98 37.31 L418.69 37.78 L419.40 37.82 L420.11 37.79 L420.82 37.65 L421.53 37.53 L422.24 37.44 L422.94 37.56 L423.65 37.19 L424.36 36.67 L425.07 36.07 L425.78 35.35 L426.49 34.81 L427.20 34.36 L427.91 34.05 L428.62 33.55 L429.32 33.04 L430.03 32.71 L430.74 32.47 L431.45 32.32 L432.16 32.32 L432.87 32.43 L433.58 32.48 L434.29 32.99 L434.99 33.43 L435.70 34.04 L436.41 34.74 L437.12 35.56 L437.83 36.16 L438.54 36.45 L439.25 36.73 L439.96 36.95 L440.66 36.62 L441.37 35.79 L442.08 34.95 L442.79 34.17 L443.50 33.51 L444.21 33.12 L444.92 32.72 L445.63 33.00 L446.34 33.54 L447.04 34.34 L447.75 35.15 L448.46 35.47 L449.17 35.78 L449.88 35.94 L450.59 36.12 L451.30 36.22 L452.01 36.39 L452.71 36.32 L453.42 36.15 L454.13 35.96 L454.84 35.63 L455.55 35.24 L456.26 35.03 L456.97 35.23 L457.68 35.36 L458.38 35.64 L459.09 35.65 L459.80 35.56 L460.51 35.54 L461.22 35.62 L461.93 35.49 L462.64 35.48 L463.35 35.50 L464.06 35.75 L464.76 36.12 L465.47 36.51 L466.18 36.71 L466.89 36.87 L467.60 36.76 L468.31 36.45 L469.02 35.79 L469.73 34.95 L470.43 34.01 L471.14 33.25 L471.85 32.73 L472.56 32.17 L473.27 31.83 L473.98 31.80 L474.69 32.14 L475.40 32.58 L476.10 33.15 L476.81 33.69 L477.52 34.41 L478.23 34.81 L478.94 35.22 L479.65 35.15 L480.36 35.43 L481.07 35.84 L481.78 35.77 L482.48 35.60 L483.19 35.18 L483.90 34.50 L484.61 33.88 L485.32 33.27 L486.03 33.03 L486.74 32.86 L487.45 32.63 L488.15 32.57 L488.86 32.73 L489.57 33.17 L490.28 33.75 L490.99 34.06 L491.70 34.25 L492.41 34.43 L493.12 34.49 L493.82 34.72 L494.53 34.89 L495.24 35.05 L495.95 35.13 L496.66 35.23 L497.37 35.04 L498.08 35.28 L498.79 35.39 L499.50 35.34 L500.20 34.98 L500.91 34.66 L501.62 34.18 L502.33 33.87 L503.04 33.91 L503.75 34.13 L504.46 34.31 L505.17 34.75 L505.87 35.12 L506.58 35.45 L507.29 35.74 L508.00 35.89 L508.71 36.06 L509.42 35.94 L510.13 35.49 L510.84 35.30 L511.54 35.01 L512.25 34.71 L512.96 34.55 L513.67 34.36 L514.38 34.03 L515.09 33.78 L515.80 33.47 L516.51 33.40 L517.22 33.36 L517.92 33.38 L518.63 33.65 L519.34 33.68 L520.05 33.51 L520.76 33.61 L521.47 34.01 L522.18 34.44 L522.89 34.74 L523.59 35.25 L524.30 35.79 L525.01 36.43 L525.72 36.59 L526.43 36.64 L527.14 36.42 L527.85 35.98 L528.56 35.66 L529.26 35.51 L529.97 35.29 L530.68 35.05 L531.39 35.11 L532.10 35.30 L532.81 35.44 L533.52 35.65 L534.23 35.84 L534.94 35.74 L535.64 35.55 L536.35 35.42 L537.06 35.41 L537.77 35.19 L538.48 34.85 L539.19 34.48 L539.90 33.92 L540.61 33.72 L541.31 33.71 L542.02 34.03 L542.73 33.97 L543.44 33.85 L544.15 34.15 L544.86 34.22 L545.57 34.00 L546.28 33.92 L546.98 34.21 L547.69 34.65 L548.40 34.88 L549.11 35.21 L549.82 35.58 L550.53 35.93 L551.24 36.28 L551.95 36.68 L552.66 37.18 L553.36 37.76 L554.07 38.34 L554.78 38.66 L555.49 38.41 L556.20 38.14 L556.91 37.49 L557.62 37.23 L558.33 36.69 L559.03 35.82 L559.74 34.70 L560.45 33.83 L561.16 33.22 L561.87 32.92 L562.58 32.84 L563.29 32.76 L564.00 32.98 L564.70 33.16 L565.41 33.16 L566.12 33.43 L566.83 33.87 L567.54 34.16 L568.25 34.42 L568.96 34.88 L569.67 35.48 L570.38 35.79 L571.08 36.25 L571.79 36.11 L572.50 35.97 L573.21 35.89 L573.92 35.77 L574.63 35.66 L575.34 35.26 L576.05 34.89 L576.75 34.69 L577.46 34.37 L578.17 34.18 L578.88 34.04 L579.59 33.58 L580.30 33.15 L581.01 33.01 L581.72 32.72 L582.42 32.61 L583.13 32.73 L583.84 32.72 L584.55 32.81 L585.26 33.19 L585.97 33.76 L586.68 34.16 L587.39 34.75 L588.10 35.36 L588.80 35.91 L589.51 36.63 L590.22 37.33 L590.93 37.90 L591.64 38.43 L592.35 38.86 L593.06 39.28 L593.77 39.42 L594.47 39.00 L595.18 38.74 L595.89 38.48 L596.60 38.19 L597.31 37.81 L598.02 37.33 L598.73 36.83 L599.44 36.15 L600.14 35.66 L600.85 35.24 L601.56 34.71 L602.27 34.33 L602.98 34.00 L603.69 33.78 L604.40 33.77 L605.11 34.35 L605.82 34.71 L606.52 35.13 L607.23 35.63 L607.94 36.14 L608.65 36.81 L609.36 37.24 L610.07 37.45 L610.78 37.52 L611.49 37.22 L612.19 37.07 L612.90 36.61 L613.61 36.26 L614.32 36.13 L615.03 35.83 L615.74 35.51 L616.45 35.19 L617.16 35.24 L617.86 35.34 L618.57 35.10 L619.28 35.11 L619.99 35.33 L620.70 35.14 L621.41 34.49 L622.12 34.46 L622.83 34.50 L623.54 34.19 L624.24 34.17 L624.95 34.49 L625.66 34.36 L626.37 34.55 L627.08 34.88 L627.79 35.19 L628.50 35.34 L629.21 35.54 L629.91 35.56 L630.62 35.59 L631.33 35.57 L632.04 35.45 L632.75 35.45 L633.46 35.62 L634.17 35.93 L634.88 36.25 L635.58 36.79 L636.29 36.96 L637.00 37.03 L637.71 37.04 L638.42 37.19 L639.13 36.80 L639.84 36.31 L640.55 35.78 L641.26 35.34 L641.96 35.38 L642.67 35.46 L643.38 35.51 L644.09 35.62 L644.80 35.89 L645.51 36.07 L646.22 36.50 L646.93 36.58 L647.63 36.83 L648.34 37.10 L649.05 37.43 L649.76 37.89 L650.47 38.12 L651.18 38.25 L651.89 38.27 L652.60 38.02 L653.30 37.52 L654.01 36.83 L654.72 36.32 L655.43 35.41 L656.14 34.38 L656.85 33.55 L657.56 33.18 L658.27 32.95 L658.98 33.12 L659.68 33.37 L660.39 33.60 L661.10 33.59 L661.81 33.72 L662.52 34.24 L663.23 34.76 L663.94 35.06 L664.65 35.44 L665.35 35.51 L666.06 35.35 L666.77 35.43 L667.48 35.57 L668.19 35.86 L668.90 36.13 L669.61 36.31 L670.32 36.44 L671.02 36.44 L671.73 36.59 L672.44 36.41 L673.15 35.85 L673.86 35.18 L674.57 34.79 L675.28 34.37 L675.99 33.64 L676.70 33.63 L677.40 33.54 L678.11 33.52 L678.82 33.71 L679.53 34.03 L680.24 34.35 L680.95 34.39 L681.66 34.57 L682.37 34.59 L683.07 34.62 L683.78 34.82 L684.49 34.96 L685.20 34.76 L685.91 34.51 L686.62 34.46 L687.33 34.59 L688.04 34.51 L688.74 34.49 L689.45 34.58 L690.16 34.89 L690.87 35.27 L691.58 35.63 L692.29 35.88 L693.00 36.15 L693.71 36.49 L694.42 36.70 L695.12 36.76 L695.83 37.06 L696.54 37.23 L697.25 37.13 L697.96 37.09 L698.67 36.72 L699.38 36.14 L700.09 35.77 L700.79 35.43 L701.50 35.28 L702.21 35.30 L702.92 35.19 L703.63 35.19 L704.34 35.14 L705.05 35.14 L705.76 35.21 L706.46 35.26 L707.17 35.07 L707.88 34.98 L708.59 34.92 L709.30 35.00" fill="none" stroke="#ff0000" stroke-width="1.3"/>
<line x1="0" y1="35.5" x2="710" y2="35.5" stroke="#ffff00" stroke-width="1.3"/>
<line x1="1.5" y1="31" x2="1.5" y2="40" stroke="#fff" stroke-width="1.6"/>
</svg>
<!--/MINI-->
</div>
<!--PLAYBTNS-->
<div class="a" style="left:1116px;top:731px;width:30px;height:28px;background:#676d75;border-radius:3px"><svg width="30" height="28"><path d="M9 7L21.5 14L9 21.2Z" fill="none" stroke="#eef0f2" stroke-width="1"/></svg></div>
<div class="a" style="left:1148px;top:731px;width:30px;height:28px;background:#676d75;border-radius:3px"><svg width="30" height="28"><rect x="9" y="7.5" width="4.5" height="14" fill="none" stroke="#eef0f2" stroke-width="1"/><rect x="16.3" y="7.5" width="4.5" height="14" fill="none" stroke="#eef0f2" stroke-width="1"/></svg></div>
<div class="a" style="left:1180px;top:731px;width:30px;height:28px;background:#676d75;border-radius:3px"><svg width="30" height="28"><rect x="9" y="8" width="12.8" height="12.5" fill="none" stroke="#eef0f2" stroke-width="1"/></svg></div>
<div class="a" style="left:1084px;top:773px;width:30px;height:28px;background:#676d75;border-radius:3px"><svg width="30" height="28"><rect x="8" y="7" width="3.3" height="14.5" fill="none" stroke="#eef0f2" stroke-width="1"/><path d="M21.8 7.8L12.6 14.2L21.8 20.6Z" fill="none" stroke="#eef0f2" stroke-width="1"/></svg></div>
<div class="a" style="left:1116px;top:773px;width:30px;height:28px;background:#676d75;border-radius:3px"><svg width="30" height="28"><path d="M14 7L7 14.2L14 21.5H16.5L9.5 14.2L16.5 7Z" fill="none" stroke="#eef0f2" stroke-width="1"/><path d="M20.5 7L13.5 14.2L20.5 21.5H23L16 14.2L23 7Z" fill="none" stroke="#eef0f2" stroke-width="1"/></svg></div>
<div class="a" style="left:1148px;top:773px;width:30px;height:28px;background:#676d75;border-radius:3px"><svg width="30" height="28"><path d="M9.5 7L16.5 14.2L9.5 21.5H7L14 14.2L7 7Z" fill="none" stroke="#eef0f2" stroke-width="1"/><path d="M16 7L23 14.2L16 21.5H13.5L20.5 14.2L13.5 7Z" fill="none" stroke="#eef0f2" stroke-width="1"/></svg></div>
<div class="a" style="left:1180px;top:773px;width:30px;height:28px;background:#676d75;border-radius:3px"><svg width="30" height="28"><path d="M8 7.8L17.2 14.2L8 20.6Z" fill="none" stroke="#eef0f2" stroke-width="1"/><rect x="18.5" y="7" width="3.3" height="14.5" fill="none" stroke="#eef0f2" stroke-width="1"/></svg></div>
<!--/PLAYBTNS-->

<!-- Display Option -->
<div class="grp" style="left:359px;top:824px;width:859px;height:51px"></div>
<div class="gl" style="left:362px;top:818px">Display Option</div>
<div class="cb" style="left:433px;top:848px;width:11px;height:11px;border:1px solid #2a6fd6;border-radius:2px"></div><div class="lbl" style="left:448px;top:846px">Plot Table</div>
<div class="cb" style="left:605px;top:848px;width:11px;height:11px;border:1px solid #b5b9be;border-radius:2px"></div><div class="lbl" style="left:620px;top:846px">Show Symbol</div>
<div class="cb" style="left:807px;top:848px;width:11px;height:11px;border:1px solid #b5b9be;border-radius:2px"></div><div class="lbl" style="left:821px;top:846px">Background Graph</div>
<div class="btn" style="left:358px;top:883px;width:860px;height:28px;line-height:27px;background:#575d65">Draw Graph</div>

<div class="a" style="left:2px;top:923px;width:1221px;height:1px;background:#c5c9ce"></div>
<div class="a" style="left:1114px;top:933px;width:104px;height:36px;background:#fff;border:1px solid #50555b;border-radius:4px;font-size:11px;letter-spacing:0.9px;color:#3a3f45;text-align:center;line-height:33px">Close</div>

</body></html>
